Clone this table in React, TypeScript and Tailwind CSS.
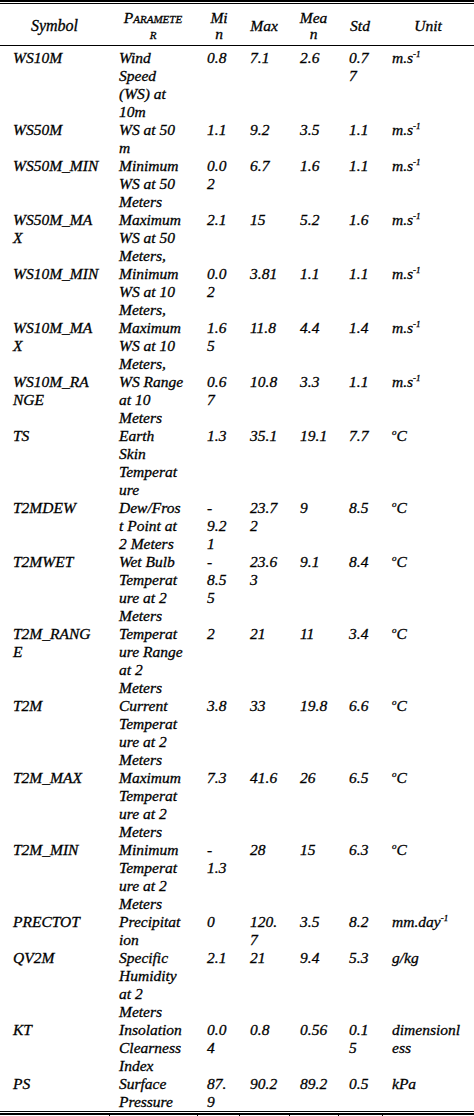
import React from 'react';

type Row = {
  symbol: string[];
  parameter: string[];
  min: string[];
  max: string[];
  mean: string[];
  std: string[];
  unit: React.ReactNode[];
};

const ms = (
  <>
    m.s<sup className="text-[9px] -top-[6px]">-1</sup>
  </>
);
const degC = (
  <>
    <sup className="text-[9px] -top-[6px]">o</sup>C
  </>
);

const rows: Row[] = [
  { symbol: ['WS10M'], parameter: ['Wind', 'Speed', '(WS) at', '10m'], min: ['0.8'], max: ['7.1'], mean: ['2.6'], std: ['0.7', '7'], unit: [ms] },
  { symbol: ['WS50M'], parameter: ['WS at 50', 'm'], min: ['1.1'], max: ['9.2'], mean: ['3.5'], std: ['1.1'], unit: [ms] },
  { symbol: ['WS50M_MIN'], parameter: ['Minimum', 'WS at 50', 'Meters'], min: ['0.0', '2'], max: ['6.7'], mean: ['1.6'], std: ['1.1'], unit: [ms] },
  { symbol: ['WS50M_MA', 'X'], parameter: ['Maximum', 'WS at 50', 'Meters,'], min: ['2.1'], max: ['15'], mean: ['5.2'], std: ['1.6'], unit: [ms] },
  { symbol: ['WS10M_MIN'], parameter: ['Minimum', 'WS at 10', 'Meters,'], min: ['0.0', '2'], max: ['3.81'], mean: ['1.1'], std: ['1.1'], unit: [ms] },
  { symbol: ['WS10M_MA', 'X'], parameter: ['Maximum', 'WS at 10', 'Meters,'], min: ['1.6', '5'], max: ['11.8'], mean: ['4.4'], std: ['1.4'], unit: [ms] },
  { symbol: ['WS10M_RA', 'NGE'], parameter: ['WS Range', 'at 10', 'Meters'], min: ['0.6', '7'], max: ['10.8'], mean: ['3.3'], std: ['1.1'], unit: [ms] },
  { symbol: ['TS'], parameter: ['Earth', 'Skin', 'Temperat', 'ure'], min: ['1.3'], max: ['35.1'], mean: ['19.1'], std: ['7.7'], unit: [degC] },
  { symbol: ['T2MDEW'], parameter: ['Dew/Fros', 't Point at', '2 Meters'], min: ['-', '9.2', '1'], max: ['23.7', '2'], mean: ['9'], std: ['8.5'], unit: [degC] },
  { symbol: ['T2MWET'], parameter: ['Wet Bulb', 'Temperat', 'ure at 2', 'Meters'], min: ['-', '8.5', '5'], max: ['23.6', '3'], mean: ['9.1'], std: ['8.4'], unit: [degC] },
  { symbol: ['T2M_RANG', 'E'], parameter: ['Temperat', 'ure Range', 'at 2', 'Meters'], min: ['2'], max: ['21'], mean: ['11'], std: ['3.4'], unit: [degC] },
  { symbol: ['T2M'], parameter: ['Current', 'Temperat', 'ure at 2', 'Meters'], min: ['3.8'], max: ['33'], mean: ['19.8'], std: ['6.6'], unit: [degC] },
  { symbol: ['T2M_MAX'], parameter: ['Maximum', 'Temperat', 'ure at 2', 'Meters'], min: ['7.3'], max: ['41.6'], mean: ['26'], std: ['6.5'], unit: [degC] },
  { symbol: ['T2M_MIN'], parameter: ['Minimum', 'Temperat', 'ure at 2', 'Meters'], min: ['-', '1.3'], max: ['28'], mean: ['15'], std: ['6.3'], unit: [degC] },
  {
    symbol: ['PRECTOT'], parameter: ['Precipitat', 'ion'], min: ['0'], max: ['120.', '7'], mean: ['3.5'], std: ['8.2'],
    unit: [<>mm.day<sup className="text-[9px] -top-[6px]">-1</sup></>],
  },
  { symbol: ['QV2M'], parameter: ['Specific', 'Humidity', 'at 2', 'Meters'], min: ['2.1'], max: ['21'], mean: ['9.4'], std: ['5.3'], unit: ['g/kg'] },
  { symbol: ['KT'], parameter: ['Insolation', 'Clearness', 'Index'], min: ['0.0', '4'], max: ['0.8'], mean: ['0.56'], std: ['0.1', '5'], unit: ['dimensionl', 'ess'] },
  { symbol: ['PS'], parameter: ['Surface', 'Pressure'], min: ['87.', '9'], max: ['90.2'], mean: ['89.2'], std: ['0.5'], unit: ['kPa'] },
];

function Lines({ lines }: { lines: React.ReactNode[] }) {
  return (
    <>
      {lines.map((l, i) => (
        <div key={i}>{l}</div>
      ))}
    </>
  );
}

const widths = ['w-[109px]', 'w-[88px]', 'w-[42px]', 'w-[50px]', 'w-[49px]', 'w-[44px]', 'w-[92px]'];

export default function App() {
  return (
    <div className="w-[474px] bg-white text-black italic whitespace-nowrap [font-family:'Liberation_Serif','Times_New_Roman',serif] text-[15.5px] [-webkit-text-stroke:0.3px_black]">
      <div className="h-[2px] bg-black" />
      <div className="h-[1px] bg-white" />
      <div className="h-[1px] bg-black" />

      <table className="w-[474px] table-fixed">
        <colgroup>
          {widths.map((w) => (
            <col key={w} className={w} />
          ))}
        </colgroup>
        <thead>
          <tr className="h-[41px] border-b border-black leading-[16px] text-center">
            <th className="font-normal pt-[4px] align-middle text-[16px]">Symbol</th>
            <th className="font-normal pt-[4px] align-middle [font-variant:small-caps]">
              <div>Paramete</div>
              <div>r</div>
            </th>
            <th className="font-normal pt-[4px] pl-[2px] align-middle">
              <div>Mi</div>
              <div>n</div>
            </th>
            <th className="font-normal pt-[4px] align-middle">Max</th>
            <th className="font-normal pt-[4px] align-middle">
              <div>Mea</div>
              <div>n</div>
            </th>
            <th className="font-normal pt-[4px] align-middle">Std</th>
            <th className="font-normal pt-[4px] align-middle">Unit</th>
          </tr>
        </thead>
        <tbody className="leading-[18px]">
          {rows.map((r, i) => {
            const pad = i === 0 ? 'pt-[3px] align-top' : 'align-top';
            return (
              <tr key={i}>
                <td className={`${pad} pl-[13px]`}><Lines lines={r.symbol} /></td>
                <td className={`${pad} pl-[10px]`}><Lines lines={r.parameter} /></td>
                <td className={`${pad} pl-[10px]`}><Lines lines={r.min} /></td>
                <td className={`${pad} pl-[11px]`}><Lines lines={r.max} /></td>
                <td className={`${pad} pl-[11px]`}><Lines lines={r.mean} /></td>
                <td className={`${pad} pl-[11px]`}><Lines lines={r.std} /></td>
                <td className={`${pad} pl-[10px]`}><Lines lines={r.unit} /></td>
              </tr>
            );
          })}
        </tbody>
      </table>

      <div className="h-[1px] bg-black" />
      <div className="h-[1px] bg-white" />
      <div className="h-[2px] bg-black" />
      <div className="flex h-[6px]">
        <div className="w-[109px]" />
        <div className="w-[88px] border-l border-black" />
        <div className="w-[42px] border-l border-black" />
        <div className="w-[50px] border-l border-black" />
        <div className="w-[49px] border-l border-black" />
        <div className="w-[44px] border-l border-black" />
        <div className="w-[92px] border-l border-black" />
      </div>
    </div>
  );
}
